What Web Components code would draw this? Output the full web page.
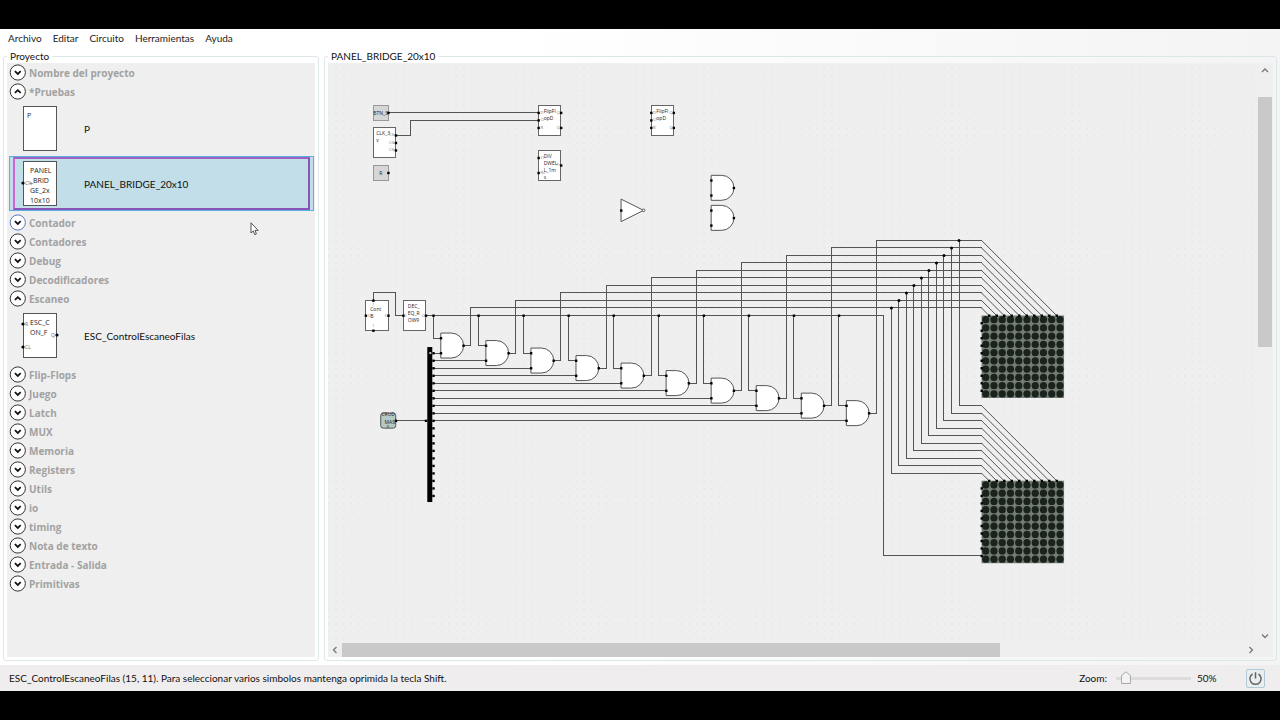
<!DOCTYPE html>
<html lang="es">
<head>
<meta charset="utf-8">
<title>PANEL_BRIDGE_20x10</title>
<style>
  html, body { height: 100%; margin: 0; }
  body { background: #000; font: 10px/14px Lato, "Open Sans", sans-serif; color: #111; }
</style>
</head>
<body>
<app-shell>
  <menu-bar slot="menu" items="Archivo,Editar,Circuito,Herramientas,Ayuda"></menu-bar>
  <group-box slot="side" heading="Proyecto">
    <project-tree>
      <tree-group label="Nombre del proyecto"></tree-group>
      <tree-group label="*Pruebas" open>
        <symbol-item name="P" lines="P"></symbol-item>
        <symbol-item name="PANEL_BRIDGE_20x10" lines="PANEL,_BRID,GE_2x,10x10" inset left="23:Clk" selected></symbol-item>
      </tree-group>
      <tree-group label="Contador" hot></tree-group>
      <tree-group label="Contadores"></tree-group>
      <tree-group label="Debug"></tree-group>
      <tree-group label="Decodificadores"></tree-group>
      <tree-group label="Escaneo" open>
        <symbol-item name="ESC_ControlEscaneoFilas" lines="ESC_C,ON_F" inset left="12:R,35:CL" right="23:Q"></symbol-item>
      </tree-group>
      <tree-group label="Flip-Flops"></tree-group>
      <tree-group label="Juego"></tree-group>
      <tree-group label="Latch"></tree-group>
      <tree-group label="MUX"></tree-group>
      <tree-group label="Memoria"></tree-group>
      <tree-group label="Registers"></tree-group>
      <tree-group label="Utils"></tree-group>
      <tree-group label="io"></tree-group>
      <tree-group label="timing"></tree-group>
      <tree-group label="Nota de texto"></tree-group>
      <tree-group label="Entrada - Salida"></tree-group>
      <tree-group label="Primitivas"></tree-group>
    </project-tree>
  </group-box>
  <group-box slot="main" heading="PANEL_BRIDGE_20x10">
    <circuit-view></circuit-view>
  </group-box>
  <status-bar slot="status" zoom="50">ESC_ControlEscaneoFilas (15, 11). Para seleccionar varios simbolos mantenga oprimida la tecla Shift.</status-bar>
</app-shell>

<script>
function define(name, render) {
  customElements.define(name, class extends HTMLElement {
    constructor() { super(); this.attachShadow({ mode: 'open' }); }
    connectedCallback() { this.shadowRoot.innerHTML = render(this); }
  });
}

define('app-shell', () => `
  <style>
    :host { display: flex; flex-direction: column; box-sizing: border-box; height: 100vh; padding: 29px 0; position: relative; }
    .window { flex: 1; min-height: 0; display: flex; flex-direction: column;
      background: linear-gradient(90deg, #fff 0, #fff 40%, #f4f4f4 100%); }
    main { flex: 1; min-height: 0; display: grid; grid-template-columns: 316px minmax(0, 1fr); gap: 5px; padding: 0 3px 4px 3px; }
    .pointer { position: absolute; left: 250px; top: 222px; width: 9px; height: 14px; }
  </style>
  <div class="window">
    <slot name="menu"></slot>
    <main><slot name="side"></slot><slot name="main"></slot></main>
    <slot name="status"></slot>
  </div>
  <svg class="pointer" viewBox="0 0 9 14" aria-hidden="true">
    <path d="M1 .8V11l2.3-2 1.5 3.7 1.6-.7L5 8.4h3.2z" fill="#fff" stroke="#444" stroke-width=".9"/>
  </svg>`);

define('menu-bar', el => `
  <style>
    :host { display: block; height: 20px; }
    nav { display: flex; gap: 11px; padding: 2px 8px; }
    button { border: 0; padding: 0; background: none; font: inherit; color: #222; }
  </style>
  <nav>${el.getAttribute('items').split(',').map(t => `<button type="button">${t}</button>`).join('')}</nav>`);

define('group-box', el => `
  <style>
    :host { display: flex; min-width: 0; min-height: 0; }
    fieldset { flex: 1; display: flex; box-sizing: border-box; margin: 0; min-width: 0; min-height: 0; padding: 0 3px 3px 3px;
      border: 1px solid #dde7ea; border-radius: 3px; }
    legend { margin-left: 0; padding: 0 3px; height: 14px; }
    ::slotted(*) { flex: 1; min-width: 0; }
  </style>
  <fieldset><legend>${el.getAttribute('heading')}</legend><slot></slot></fieldset>`);

define('project-tree', () => `
  <style>
    :host { display: flex; flex-direction: column; box-sizing: border-box; background: #efefef; padding: 0 1px 0 2px; overflow: hidden; }
  </style><slot></slot>`);

define('tree-group', el => {
  const open = el.hasAttribute('open');
  return `
  <style>
    :host { display: block; flex: none; }
    button { display: flex; align-items: center; gap: 3px; width: 100%; height: 19px; padding: 0; border: 0;
      background: none; font: inherit; font-family: "Open Sans", "Noto Sans", sans-serif; font-weight: 700; color: #a2a2a2; text-align: left; }
    svg { width: 17px; height: 17px; flex: none; }
    .body { padding-bottom: 2px; }
  </style>
  <button type="button" aria-expanded="${open}">
    <svg viewBox="0 0 17 17" aria-hidden="true">
      <circle cx="8.8" cy="8.5" r="7.6" fill="#fff" stroke="${el.hasAttribute('hot') ? '#5579b8' : '#333'}"/>
      <path d="${open ? 'M5.9 9.9l2.9-2.7 2.9 2.7' : 'M5.9 7.2l2.9 2.7 2.9-2.7'}" fill="none" stroke="#111" stroke-width="1.8"/>
    </svg>${el.getAttribute('label')}
  </button>
  ${open ? '<div class="body"><slot></slot></div>' : ''}`;
});

define('symbol-item', el => {
  const pins = (side) => (el.getAttribute(side) || '').split(',').filter(Boolean).map(p => {
    const [y, t] = p.split(':'), l = side === 'left';
    return `<circle cx="${l ? 2 : 36}" cy="${y}" r="1.6" fill="#000"/>
      <text x="${l ? 4 : 34}" y="${+y + 2}" font-size="5" fill="#666" ${l ? '' : 'text-anchor="end"'}>${t}</text>`;
  }).join('');
  const tx = el.hasAttribute('inset') ? 9 : 6;
  return `
  <style>
    :host { display: block; }
    .item { display: flex; align-items: center; gap: 25px; box-sizing: border-box; height: 55px; padding: 0 12px; position: relative; }
    .item.selected { background: #c2dee8; border: 1px solid #58b0dc; padding: 0 11px; }
    .item.selected::after { content: ""; position: absolute; inset: 0 3px 0 3px; border: 2px solid #8a55bb; border-left-color: #cf63d6; border-top-color: #a060c8; }
    svg { width: 38px; height: 47px; flex: none; overflow: visible; }
    text { font-family: "Open Sans", "Noto Sans", sans-serif; }
  </style>
  <div class="item ${el.hasAttribute('selected') ? 'selected' : ''}">
    <svg viewBox="0 0 38 47" aria-hidden="true">
      <rect x="2.5" y="1.5" width="33" height="44" fill="#fff" stroke="#555"/>
      ${el.getAttribute('lines').split(',').map((t, i) => `<text x="${tx}" y="${13 + i * 10}" font-size="7" fill="#222">${t}</text>`).join('')}
      ${pins('left')}${pins('right')}
    </svg>
    <span>${el.getAttribute('name')}</span>
  </div>`;
});

/* Grid pitch and the canvas position of the grid origin (first bus junction). */
const U = 7.51, OX = 105.3, OY = 252.5;
const X = u => +(OX + u * U).toFixed(2), Y = u => +(OY + u * U).toFixed(2);

function drawing() {
  const range = n => [...Array(n).keys()];
  const wire = (...p) => `<polyline points="${p.map(([a, b]) => X(a) + ',' + Y(b)).join(' ')}"/>`;
  const pin = (a, b) => `<rect x="${X(a) - 1}" y="${Y(b) - 1}" width="2.4" height="2.4"/>`;
  const and = (a, b) => `<path d="M${X(a)} ${Y(b) - 12.5}h10.5a12.3 12.5 0 0 1 0 25H${X(a)}z"/>`;
  const andPins = (a, b) => pin(a, b - 1) + pin(a, b + 1) + pin(a + 3, b);
  const box = (a, b, w, h) => `<rect x="${X(a)}" y="${Y(b)}" width="${w * U}" height="${h * U}"/>`;
  const label = (a, b, lines, s = 5) => lines.map((t, i) => `<text x="${X(a)}" y="${Y(b) + i * 7}" font-size="${s}">${t}</text>`).join('');
  const tag = (a, b, t) => `<text class="tag" x="${X(a) + 2}" y="${Y(b) + 1}" font-size="4">${t}</text>`;
  const tagR = (a, b, t, s = 4) => `<text class="tag" x="${X(a) - 1}" y="${Y(b) + 1}" font-size="${s}" text-anchor="end">${t}</text>`;

  let wires = '', gates = '', pins = '';
  for (const i of range(10)) {
    wires += wire([4 + 6 * i, 4 + i], [5 + 6 * i, 4 + i], [5 + 6 * i, -1 - i], [73, -1 - i]);
    wires += wire([61 + i, -1 - i], [61 + i, 21 - i], [73, 21 - i]);
    wires += wire([6 * i, 0], [6 * i, 3 + i], [1 + 6 * i, 3 + i]);
    wires += wire([0, 5 + i], [1 + 6 * i, 5 + i]);
    gates += and(1 + 6 * i, 4 + i);
    pins += andPins(1 + 6 * i, 4 + i) + pin(6 * i, 0) + pin(73, 1 + i) + pin(73, 23 + i) + pin(74 + i, 0) + pin(74 + i, 22);
    pins += `<circle cx="${X(61 + i)}" cy="${Y(-1 - i)}" r="1.5"/>`;
  }
  const slants = range(10).map(i => wire([73, -1 - i], [74 + i, 0]) + wire([73, 21 - i], [74 + i, 22])).join('');
  wires += wire([-1, 0], [60, 0], [60, 32], [73, 32]);
  wires += wire([-8, -2], [-8, -3], [-5, -3], [-5, 0], [-4, 0]);
  wires += wire([-5, 14], [-1, 14]) + wire([-6, -27], [14, -27]) + wire([-5, -24], [-3, -24], [-3, -26], [14, -26]);
  gates += and(37, -17) + and(37, -13);
  pins += andPins(37, -17) + andPins(37, -13) + pin(25, -14);
  pins += range(20).map(i => pin(0, 5 + i)).join('');
  pins += [[-4, 0], [-1, 0], [-9, 0], [-6, 0], [-8, -2], [-8, 2], [-5, 14], [-1, 14], [-6, -27], [-6, -19], [-5, -24], [-5, -23], [-5, -22],
    [14, -27], [14, -26], [14, -25], [17, -27], [17, -25], [29, -27], [29, -26], [29, -25], [32, -27], [32, -25],
    [14, -21], [14, -19], [17, -20]].map(p => pin(...p)).join('');

  const matrix = (a, b) => `<g><rect x="${X(a)}" y="${Y(b)}" width="82.5" height="82.5" fill="#747d75"/>${
    range(100).map(k => `<circle cx="${X(a) + 4.2 + (k % 10) * 8.25}" cy="${Y(b) + 4.2 + Math.floor(k / 10) * 8.25}" r="3.6" fill="#1a221c"/>`).join('')}</g>`;

  return `
    <defs><pattern id="grid" x="${OX}" y="${OY}" width="${U}" height="${U}" patternUnits="userSpaceOnUse">
      <rect width="1" height="1" fill="#dfdfdf"/></pattern></defs>
    <rect width="100%" height="100%" fill="url(#grid)"/>
    <g class="wires">${wires}</g><g class="slants">${slants}</g>
    <g class="shape">${gates}<path d="M${X(25)} ${Y(-15.5)}L${X(28)} ${Y(-14)}L${X(25)} ${Y(-12.5)}z"/><circle cx="${X(28)}" cy="${Y(-14)}" r="1.3"/></g>
    <g class="blocks">${box(-9, -2, 3, 4)}${box(-4, -2, 3, 4)}${box(-8, -25, 3, 4)}${box(14, -28, 3, 4)}${box(29, -28, 3, 4)}${box(14, -22, 3, 4)}</g>
    <g class="blocks grey">${box(-8, -28, 2, 2)}${box(-8, -20, 2, 2)}</g>
    <rect x="${X(-7)}" y="${Y(13)}" width="15" height="15" rx="2.5" fill="#b5cac6" stroke="#555"/>
    <rect x="${X(-1) + 1.5}" y="${Y(4.2)}" width="5" height="155"/>
    <g>${matrix(73, 0)}${matrix(73, 22)}</g>
    <g class="pins">${pins}</g>
    <rect x="${X(0) - 4}" y="${Y(5) - 1}" width="2" height="2" fill="#ccc"/>
    <g class="labels">
      ${label(-8, -26.75, ['BTN_S'])}${label(-7.6, -24, ['CLK_3', 'v'])}${label(-7.2, -18.7, ['R'])}
      ${label(14.7, -27, ['FlipFl', 'opD'])}${label(29.7, -27, ['FlipFl', 'opD'])}${label(14.7, -21, ['DIV', 'DWEL', 'L_1m', 's'])}
      ${label(-8.4, -0.6, ['Cont', 'B'])}${label(-3.4, -1, ['DEC_', 'EQ_R', 'OW9'])}
      ${label(-6.9, 13.4, ['CRUD'])}${label(-6.5, 14.4, ['MAS'])}${label(-6.2, 15, ['K'], 4)}
      ${tag(14, -27, 'D')}${tag(14, -26, 'Cl')}${tag(14, -25, 'R')}${tag(29, -27, 'D')}${tag(29, -26, 'Cl')}${tag(29, -25, 'R')}
      ${tagR(17, -27, 'Q')}${tagR(17, -25, 'Q')}${tagR(32, -27, 'Q')}${tagR(32, -25, 'Q')}
      ${tag(14, -21, 'Cl')}${tag(14, -19, 'Rs')}${tagR(17, -20, 'Ps', 3)}
      ${tagR(-5, -24, 'Clk')}${tagR(-5, -23, 'Clk')}${tagR(-5, -22, 'Clk')}
      ${tag(-9, 0, 'Cl')}${tagR(-6, 0, 'C')}${tag(-8.4, -1.4, '1')}${tag(-8.4, 1.4, '1')}${tag(-4, 0, 'I')}${tagR(-1, 0, 'O')}
    </g>`;
}

define('circuit-view', () => `
  <style>
    :host { display: grid; grid-template: minmax(0, 1fr) 14px / minmax(0, 1fr) 15px; background: #efefef; }
    .sheet { display: block; width: 100%; height: 100%; font-family: "Open Sans", "Noto Sans", sans-serif; }
    .wires, .slants { fill: none; stroke: #555; stroke-width: 1; }
    .wires, .blocks { shape-rendering: crispEdges; }
    .shape { fill: #fff; stroke: #555; stroke-width: 1; }
    .blocks { fill: #fff; stroke: #666; }
    .grey { fill: #d6d6d6; stroke: #999; }
    .pins { fill: #000; }
    .labels { fill: #222; }
    .tag { fill: #777; }
  </style>
  <svg class="sheet" role="img" aria-label="Circuito">${drawing()}</svg>
  <scroll-bar vertical></scroll-bar>
  <scroll-bar></scroll-bar>`);

define('scroll-bar', el => {
  const v = el.hasAttribute('vertical');
  const arrow = d => `<button type="button" aria-label="Desplazar"><svg viewBox="0 0 8 8"><path d="${d}" fill="none" stroke="#777" stroke-width="1.3"/></svg></button>`;
  return `
  <style>
    :host { display: flex; flex-direction: ${v ? 'column' : 'row'}; min-width: 0; min-height: 0; }
    button { flex: none; display: grid; place-items: center; width: 14px; height: 14px; padding: 0; border: 0; background: none; }
    svg { width: 8px; height: 8px; }
    .track { flex: 1; display: flex; flex-direction: inherit; min-width: 0; min-height: 0; padding: ${v ? '20px 0 0' : '0'}; }
    .thumb { background: #c9c9c9; flex: none; ${v ? 'width: 14px; height: 47%' : 'width: 73%'}; }
  </style>
  ${arrow(v ? 'M1 6l3-3 3 3' : 'M5.5 1l-3 3 3 3')}
  <div class="track"><div class="thumb"></div></div>
  ${arrow(v ? 'M1 2.5l3 3 3-3' : 'M2.5 1l3 3-3 3')}`;
});

define('status-bar', el => `
  <style>
    :host { display: flex; align-items: center; height: 26px; padding: 0 15px 0 9px; background: #f0edee; }
    .text { flex: 1; }
    label { margin-right: 9px; }
    input { appearance: none; width: 75px; height: 18px; margin: 0; background: none; }
    input::-webkit-slider-runnable-track { height: 3px; background: #dcdcdc; }
    input::-webkit-slider-thumb { appearance: none; width: 10px; height: 13px; margin-top: -6px;
      background: url("data:image/svg+xml,%3Csvg xmlns='http://www.w3.org/2000/svg' viewBox='0 0 10 13'%3E%3Cpath d='M.5 12.5V4.5L5 .8l4.500 3.700v8z' fill='%23f3f3f3' stroke='%23aaa'/%3E%3C/svg%3E") no-repeat; }
    output { width: 55px; padding-left: 6px; box-sizing: border-box; }
    button { width: 19px; height: 19px; padding: 0; display: grid; place-items: center; border: 1px solid #b4c9d8; border-radius: 2px; background: #e9eef1; }
    button svg { width: 15px; height: 15px; }
  </style>
  <span class="text"><slot></slot></span>
  <label for="zoom">Zoom:</label>
  <input id="zoom" type="range" min="44" max="100" value="48">
  <output for="zoom">${el.getAttribute('zoom')}%</output>
  <button type="button" aria-label="Encender">
    <svg viewBox="0 0 15 15"><path d="M4.500 3A5.600 5.600 0 1 0 10.500 3M7.500 1.200V7.500" fill="none" stroke="#666" stroke-width="1.5"/></svg>
  </button>`);
</script>
</body>
</html>
